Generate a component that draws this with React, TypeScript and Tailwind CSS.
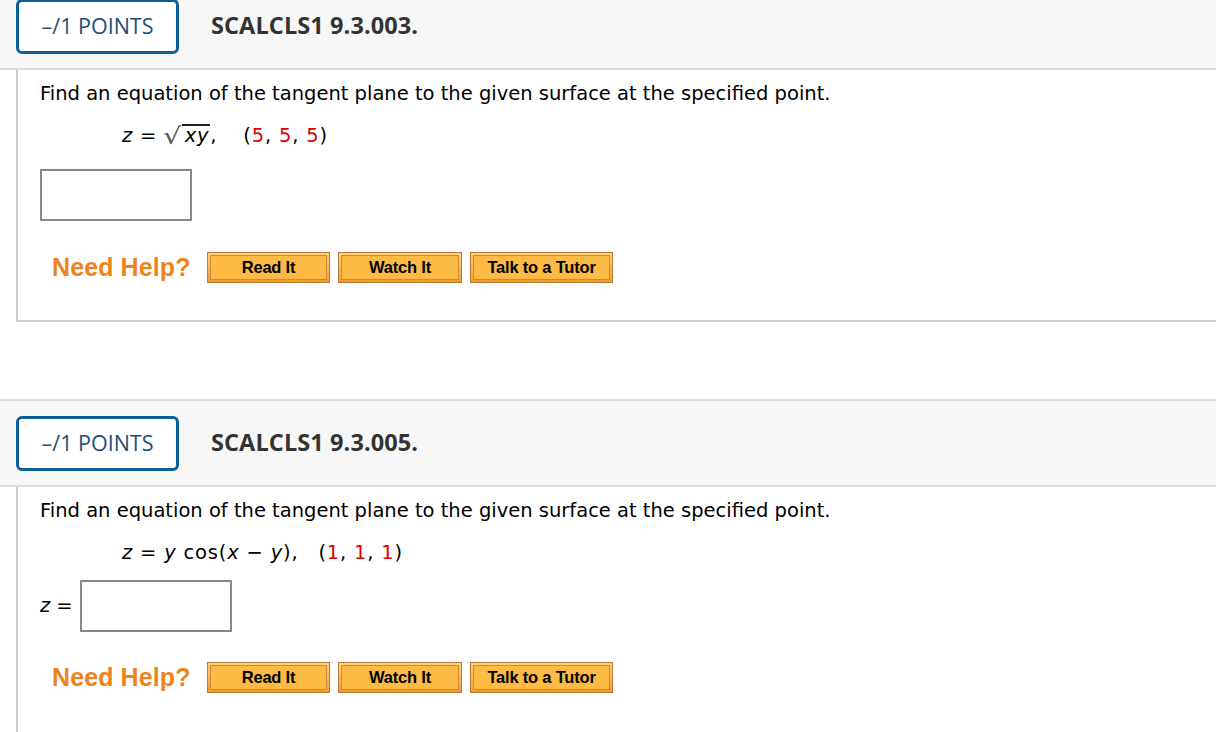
import React from 'react';

const HelpButton: React.FC<{ label: string; w: string }> = ({ label, w }) => (
  <div className={`h-[31px] ${w} border border-[#b97a35] bg-gradient-to-b from-[#ffd27a] to-[#f59a2a] p-[2px]`}>
    <div className="h-full w-full border border-[#c98a3e] bg-[#fdbb45] flex items-center justify-center">
      <span className="font-['Liberation_Sans',Arial,sans-serif] font-bold text-[16.5px] leading-none text-black tracking-[-0.2px]">
        {label}
      </span>
    </div>
  </div>
);

const NeedHelp: React.FC = () => (
  <div className="flex items-center h-[31px]">
    <span className="ml-[12px] w-[155px] font-['Liberation_Sans',Arial,sans-serif] font-bold text-[25px] leading-none text-[#ee8419] tracking-[0.1px]">
      Need Help?
    </span>
    <div className="flex gap-[8px]">
      <HelpButton label="Read It" w="w-[123px]" />
      <HelpButton label="Watch It" w="w-[124px]" />
      <HelpButton label="Talk to a Tutor" w="w-[143px]" />
    </div>
  </div>
);

const Header: React.FC<{ code: string; first?: boolean }> = ({ code, first }) => (
  <div
    className={`${first ? 'mt-[-16px] h-[86px]' : 'border-t-2 h-[88px]'} border-b-2 border-[#dddddd] bg-[#f7f7f7] flex items-center pl-[16px]`}
  >
    <div className="w-[163px] h-[55px] border-[3px] border-[#0b5f96] rounded-[6px] bg-white flex items-center justify-center">
      <span className="font-['Open_Sans',sans-serif] text-[21.5px] text-[#1c4f78]">–/1 POINTS</span>
    </div>
    <span className="ml-[32px] font-['Open_Sans',sans-serif] font-bold text-[23.5px] text-[#333333] tracking-[0.1px]">{code}</span>
  </div>
);

const Prompt: React.FC = () => (
  <p className="leading-[24px] text-black">
    Find an equation of the tangent plane to the given surface at the specified point.
  </p>
);

const Red: React.FC<{ children: React.ReactNode }> = ({ children }) => (
  <span className="text-[#dd0000]">{children}</span>
);

export default function App() {
  return (
    <div className="w-[1216px] h-[732px] overflow-hidden bg-white font-['DejaVu_Sans',Verdana,sans-serif] text-[19.5px] text-black">
      <Header code="SCALCLS1 9.3.003." first />
      <div className="ml-[16px] border-l-2 border-b-2 border-[#cccccc] h-[252px] pl-[22px] pt-[12px]">
        <Prompt />
        <div className="mt-[18px] ml-[82px] flex items-center leading-[24px] whitespace-pre tracking-[0.8px]">
          <span className="italic">z</span>
          <span> = </span>
          <span className="ml-[1px] text-[#555] text-[23px] leading-[24px] scale-x-[1.25]">√</span>
          <span className="ml-[1px] border-t-[2px] border-[#222] pl-[3px] pr-[1px] italic leading-[20px] mt-[-2px]">xy</span>
          <span>,</span>
          <span className="ml-[26px]">
            (<Red>5</Red>, <Red>5</Red>, <Red>5</Red>)
          </span>
        </div>
        <div className="mt-[21px] w-[152px] h-[52px] border-2 border-[#888888] bg-white" />
        <div className="mt-[31px]">
          <NeedHelp />
        </div>
      </div>
      <div className="h-[77px]" />
      <Header code="SCALCLS1 9.3.005." />
      <div className="ml-[16px] border-l-2 border-[#cccccc] h-[260px] pl-[22px] pt-[12px]">
        <Prompt />
        <div className="mt-[18px] ml-[82px] flex items-center leading-[24px] whitespace-pre tracking-[0.8px]">
          <span className="italic">z</span>
          <span> = </span>
          <span className="italic">y</span>
          <span> cos(</span>
          <span className="italic">x</span>
          <span> − </span>
          <span className="italic">y</span>
          <span>),</span>
          <span className="ml-[20px]">
            (<Red>1</Red>, <Red>1</Red>, <Red>1</Red>)
          </span>
        </div>
        <div className="mt-[15px] flex items-center">
          <span className="italic">z</span>
          <span className="ml-[6px]">=</span>
          <div className="ml-[7px] w-[152px] h-[52px] border-2 border-[#888888] bg-white" />
        </div>
        <div className="mt-[30px]">
          <NeedHelp />
        </div>
      </div>
    </div>
  );
}
